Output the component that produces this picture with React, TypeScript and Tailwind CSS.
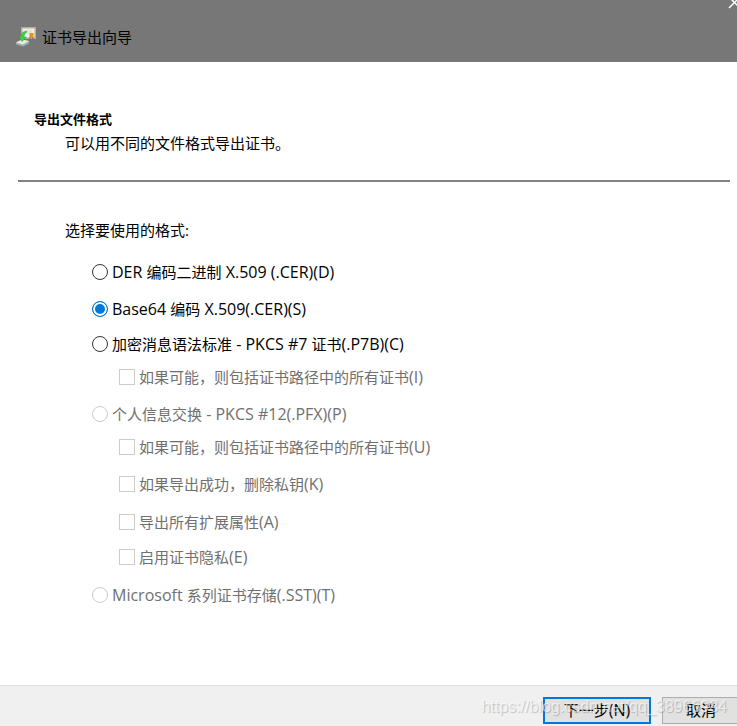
import { useState } from "react";

interface ExportOption {
    id: string;
    label: string;
    kind: "radio" | "checkbox";
    disabled: boolean;
    spacing: string;
}

const options: ExportOption[] = [
    { id: "der", label: "DER 编码二进制 X.509 (.CER)(D)", kind: "radio", disabled: false, spacing: "mt-[21px]" },
    { id: "base64", label: "Base64 编码 X.509(.CER)(S)", kind: "radio", disabled: false, spacing: "mt-4" },
    { id: "p7b", label: "加密消息语法标准 - PKCS #7 证书(.P7B)(C)", kind: "radio", disabled: false, spacing: "mt-3.5" },
    { id: "p7b-path", label: "如果可能，则包括证书路径中的所有证书(I)", kind: "checkbox", disabled: true, spacing: "mt-3" },
    { id: "pfx", label: "个人信息交换 - PKCS #12(.PFX)(P)", kind: "radio", disabled: true, spacing: "mt-4" },
    { id: "pfx-path", label: "如果可能，则包括证书路径中的所有证书(U)", kind: "checkbox", disabled: true, spacing: "mt-3" },
    { id: "pfx-delete", label: "如果导出成功，删除私钥(K)", kind: "checkbox", disabled: true, spacing: "mt-4" },
    { id: "pfx-extended", label: "导出所有扩展属性(A)", kind: "checkbox", disabled: true, spacing: "mt-[17px]" },
    { id: "pfx-privacy", label: "启用证书隐私(E)", kind: "checkbox", disabled: true, spacing: "mt-3.5" },
    { id: "sst", label: "Microsoft 系列证书存储(.SST)(T)", kind: "radio", disabled: true, spacing: "mt-[17px]" },
];

function CertificateIcon() {
    return (
        <svg width="20" height="20" viewBox="0 0 20 20" aria-hidden="true">
            <path d="M5 0h15v12H5z" fill="#b9ad99" />
            <path d="M6.500 1.500h12v9h-12z" fill="#efefeb" />
            <path d="M9 4h7M11 6h5" stroke="#d3d3cf" />
            <path d="M14 10v3M17 10v3" stroke="#4a7fc4" strokeWidth="1.500" />
            <path d="M13.500 6h4v5h-4z" fill="#dc951c" />
            <path d="M0 15.500 6 12.500l7 1.500v2.500l-6 3-7-2z" fill="#a4a8a6" />
            <path d="M0 15.500 6 12.500l7 1.500-6 3.500z" fill="#e6e9e8" />
            <path d="M7 18.500l4-2" stroke="#73d36b" />
            <path d="M10.500 4C7 4.500 5 6.500 5 9.500H3l3 5 4.500-4.500H8c0-2 .8-3.500 2.500-4.500z" fill="#3fd044" stroke="#2fa536" strokeWidth=".5" />
        </svg>
    );
}

// Latin runs are set one size larger than the Chinese text
function MixedText({ text }: { text: string }) {
    return (
        <span className="whitespace-pre">
            {text.split(/([ -~]+)/).map((part, index) =>
                index % 2 === 1 ? (
                    <span key={index} className="text-base leading-5">
                        {part}
                    </span>
                ) : (
                    part
                )
            )}
        </span>
    );
}

export default function App() {
    const [format, setFormat] = useState("base64");

    return (
        <div className="relative flex h-screen flex-col overflow-hidden bg-white font-['Open_Sans','Noto_Sans_CJK_SC',sans-serif] text-[15px] leading-5 text-black">
            <header className="relative flex h-[62px] shrink-0 items-end bg-[#777777] pb-[15px] pl-4">
                <CertificateIcon />
                <h1 className="ml-1.5">证书导出向导</h1>
                <button aria-label="关闭" className="absolute -top-1 -right-1 text-white">
                    <svg width="13" height="13" viewBox="0 0 13 13" aria-hidden="true">
                        <path d="M1 1l11 11M12 1L1 12" fill="none" stroke="currentColor" strokeWidth="1.500" />
                    </svg>
                </button>
            </header>

            <main className="flex-1">
                <section className="mr-[7px] ml-[18px] border-b-2 border-[#818181] pt-[47px] pb-[27px] pl-4">
                    <h2 className="text-[13px] font-bold">导出文件格式</h2>
                    <p className="mt-1 pl-[31px]">可以用不同的文件格式导出证书。</p>
                </section>

                <fieldset className="pt-[38px] pl-[65px]">
                    <legend className="contents">选择要使用的格式:</legend>
                    {options.map((option) => (
                        <label
                            key={option.id}
                            className={`flex h-[21px] w-fit items-center gap-1 ${option.spacing} ${
                                option.kind === "radio" ? "ml-[27px]" : "ml-[54px]"
                            } ${option.disabled ? "text-[#707070]" : "text-black"}`}>
                            {option.kind === "radio" ? (
                                <input
                                    type="radio"
                                    name="format"
                                    checked={format === option.id}
                                    disabled={option.disabled}
                                    onChange={() => setFormat(option.id)}
                                    className="size-4 appearance-none rounded-full border border-[#333333] bg-white checked:border-[#0078d7] checked:bg-[#0078d7] checked:shadow-[inset_0_0_0_2px_white] disabled:border-[#cccccc]"
                                />
                            ) : (
                                <input
                                    type="checkbox"
                                    disabled={option.disabled}
                                    className="size-4 appearance-none border border-[#cccccc] bg-white"
                                />
                            )}
                            <MixedText text={option.label} />
                        </label>
                    ))}
                </fieldset>
            </main>

            <footer className="relative flex h-[41px] shrink-0 justify-end gap-[11px] border-t border-[#dfdfdf] bg-[#f0f0f0] pt-[11px]">
                <button className="h-[27px] w-[108px] border-2 border-[#0078d7] bg-[#e1e1e1] pb-0.5">
                    <MixedText text="下一步(N)" />
                </button>
                <button className="h-[27px] w-[75px] border border-r-0 border-[#adadad] bg-[#e1e1e1] pb-0.5 pl-0.5">
                    取消
                </button>
                <span className="pointer-events-none absolute top-[11px] right-[10px] font-['Liberation_Sans',sans-serif] text-base leading-5 text-white/60 [text-shadow:1px_1px_1px_rgba(0,0,0,0.2)]">
                    https://blog.csdn.net/qq_38966984
                </span>
            </footer>
        </div>
    );
}
